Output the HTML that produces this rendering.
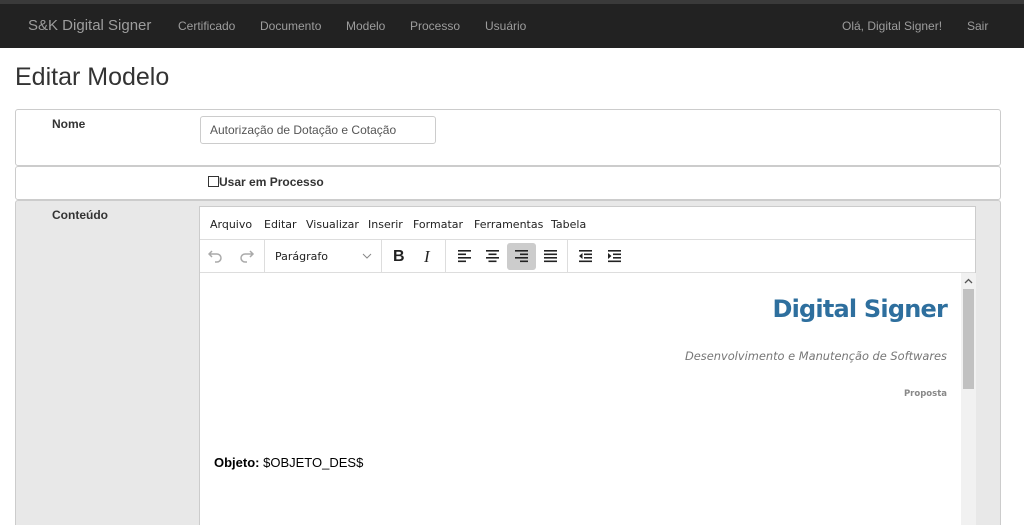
<!DOCTYPE html>
<html style="width:1024px;height:525px;overflow:hidden"><head><meta charset="utf-8"><style>
*{box-sizing:border-box;margin:0;padding:0}
body{width:1024px;height:525px;overflow:hidden;background:#fff;font-family:"Liberation Sans",sans-serif;color:#333;position:relative}
.top{position:absolute;left:0;top:0;width:1024px;height:4px;background:#3a3a3a}
.nav{position:absolute;left:0;top:4px;width:1024px;height:44px;background:#222;color:#9d9d9d;font-size:12px}
.nav span{position:absolute;top:15px}
.brand{color:#9d9d9d;font-size:15px;top:13px!important}
h1{position:absolute;left:15px;top:63px;font-size:25px;font-weight:normal;color:#333}
.p{position:absolute;left:15px;width:986px;border:1px solid #ccc;border-radius:3px;background:#fff}
.lbl{position:absolute;left:36px;font-size:12px;font-weight:bold;color:#333}
.inp{position:absolute;left:184px;top:6px;width:236px;height:28px;border:1px solid #ccc;border-radius:3px;font-size:12px;color:#555;padding:6px 9px}
.ed{position:absolute;left:199px;top:206px;width:777px;height:330px;border:1px solid #ccc;background:#fff}
.menu{height:33px;border-bottom:1px solid #ddd;font-family:"DejaVu Sans",sans-serif;font-size:11px;color:#222}
.menu span{position:absolute;top:11px}
.tb{position:absolute;top:33px;left:0;width:775px;height:33px;border-bottom:1px solid #ddd}
.sep{position:absolute;top:0;width:1px;height:32px;background:#ddd}
</style></head><body>
<div class="top"></div>
<div class="nav">
<span class="brand" style="left:28px">S&amp;K Digital Signer</span>
<span style="left:178px">Certificado</span>
<span style="left:260px">Documento</span>
<span style="left:346px">Modelo</span>
<span style="left:410px">Processo</span>
<span style="left:485px">Usuário</span>
<span style="left:842px">Olá, Digital Signer!</span>
<span style="left:967px">Sair</span>
</div>
<h1>Editar Modelo</h1>
<div class="p" style="top:109px;height:57px"><div class="lbl" style="top:7px">Nome</div><div class="inp">Autorização de Dotação e Cotação</div></div>
<div class="p" style="top:166px;height:34px"><div style="position:absolute;left:192px;top:8px;font-size:12px;font-weight:bold"><span style="display:inline-block;width:11px;height:11px;border:1px solid #333;vertical-align:-1px"></span>Usar em Processo</div></div>
<div class="p" style="top:200px;height:340px;background:#e8e8e8"><div class="lbl" style="top:7px">Conteúdo</div></div>
<div class="ed">
<div class="menu">
<span style="left:10px">Arquivo</span><span style="left:64px">Editar</span><span style="left:106px">Visualizar</span><span style="left:168px">Inserir</span><span style="left:213px">Formatar</span><span style="left:274px">Ferramentas</span><span style="left:351px">Tabela</span>
</div>
<div class="tb">
<svg style="position:absolute;left:8px;top:8px" width="50" height="16" viewBox="0 0 50 16" fill="none" stroke="#aaa" stroke-width="1.5"><path d="M4 3L1 6l3 3M1 6h8a4 4 0 0 1 0 8H7"/><path d="M42 3l3 3-3 3M45 6h-8a4 4 0 0 0 0 8h2"/></svg>
<div class="sep" style="left:64px"></div>
<span style="position:absolute;left:75px;top:10px;font-family:'DejaVu Sans',sans-serif;font-size:11px;color:#222">Parágrafo</span>
<svg style="position:absolute;left:162px;top:13px" width="10" height="7"><path d="M1 1l4 4 4-4" stroke="#888" fill="none"/></svg>
<div class="sep" style="left:181px"></div>
<span style="position:absolute;left:193px;top:8px;font-size:16px;font-weight:bold;color:#222">B</span>
<span style="position:absolute;left:224px;top:7px;font-family:'Liberation Serif',serif;font-size:17px;font-style:italic;color:#222">I</span>
<div class="sep" style="left:245px"></div>
<div style="position:absolute;left:307px;top:3px;width:29px;height:27px;background:#ccc;border-radius:3px"></div>
<svg style="position:absolute;left:256px;top:9px" width="170" height="14" fill="#222">
<g><rect x="2" y="1" width="13" height="1.6"/><rect x="2" y="4.5" width="8" height="1.6"/><rect x="2" y="8" width="13" height="1.6"/><rect x="2" y="11.5" width="8" height="1.6"/></g>
<g transform="translate(29 0)"><rect x="1" y="1" width="13" height="1.6"/><rect x="3.5" y="4.5" width="8" height="1.6"/><rect x="1" y="8" width="13" height="1.6"/><rect x="3.5" y="11.5" width="8" height="1.6"/></g>
<g transform="translate(58 0)"><rect x="1" y="1" width="13" height="1.6"/><rect x="6" y="4.5" width="8" height="1.6"/><rect x="1" y="8" width="13" height="1.6"/><rect x="6" y="11.5" width="8" height="1.6"/></g>
<g transform="translate(87 0)"><rect x="1" y="1" width="13" height="1.6"/><rect x="1" y="4.5" width="13" height="1.6"/><rect x="1" y="8" width="13" height="1.6"/><rect x="1" y="11.5" width="13" height="1.6"/></g>
<g transform="translate(122 0)"><rect x="1" y="1" width="13" height="1.6"/><rect x="6" y="4.5" width="8" height="1.6"/><rect x="6" y="8" width="8" height="1.6"/><rect x="1" y="11.5" width="13" height="1.6"/><path d="M4.5 4L1 7l3.5 3z"/></g>
<g transform="translate(151 0)"><rect x="1" y="1" width="13" height="1.6"/><rect x="6" y="4.5" width="8" height="1.6"/><rect x="6" y="8" width="8" height="1.6"/><rect x="1" y="11.5" width="13" height="1.6"/><path d="M1 4l3.5 3L1 10z"/></g>
</svg>
<div class="sep" style="left:367px"></div>
</div>
<div style="position:absolute;left:761px;top:66px;width:15px;height:262px;background:#f1f1f1"></div>
<div style="position:absolute;left:763px;top:82px;width:11px;height:100px;background:#c1c1c1"></div>
<svg style="position:absolute;left:764px;top:71px" width="9" height="6"><path d="M1 5l3.5-3.5L8 5" stroke="#555" fill="none" stroke-width="1.3"/></svg>
<div style="position:absolute;right:28px;top:88px;font-family:'DejaVu Sans',sans-serif;font-weight:bold;font-size:24px;color:#2e6f9e;letter-spacing:-0.8px">Digital Signer</div>
<div style="position:absolute;right:28px;top:142px;font-family:'DejaVu Sans',sans-serif;font-style:italic;font-size:11.4px;color:#777">Desenvolvimento e Manutenção de Softwares</div>
<div style="position:absolute;right:28px;top:182px;font-family:'DejaVu Sans',sans-serif;font-weight:bold;font-size:8.5px;color:#888">Proposta</div>
<div style="position:absolute;left:14px;top:248px;font-size:13px;color:#000"><b>Objeto:</b> $OBJETO_DES$</div>
</div>
</body></html>
